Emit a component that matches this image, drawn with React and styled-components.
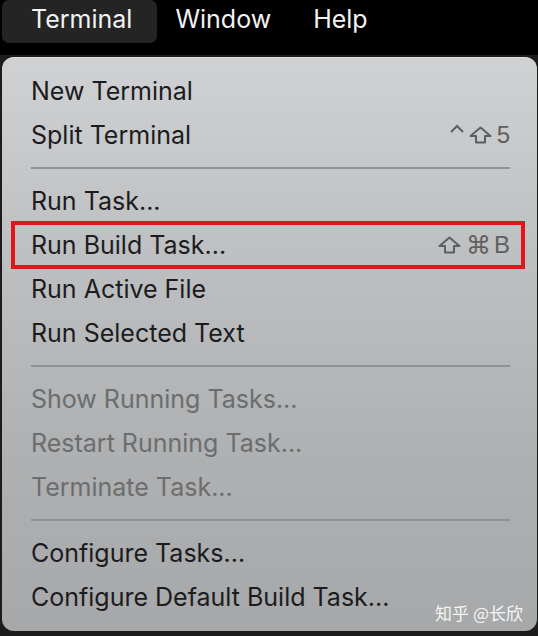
import React from 'react';
import styled, { createGlobalStyle } from 'styled-components';

const GlobalStyle = createGlobalStyle`
  html, body {
    margin: 0;
    padding: 0;
    background: #1c1c1d;
  }
  body {
    font-family: Inter, "Liberation Sans", "Noto Sans CJK SC", sans-serif;
    -webkit-font-smoothing: antialiased;
  }
`;

const Page = styled.div`
  position: relative;
  width: 538px;
  height: 636px;
  overflow: hidden;
  background: #1c1c1d;
`;

const MenuBar = styled.div`
  display: flex;
  align-items: flex-start;
  height: 55px;
  background: #000;
  padding-left: 2px;
`;

const BarItem = styled.div`
  height: 43px;
  display: flex;
  align-items: center;
  padding: 0 ${p => p.$right}px 5px ${p => p.$left}px;
  font-size: 25px;
  color: #f2f2f2;
  border-radius: 7px;
  background: ${p => (p.$active ? '#242424' : 'transparent')};
  box-sizing: border-box;
`;

const Menu = styled.div`
  margin: 2px 0 0 2px;
  width: 535px;
  box-sizing: border-box;
  padding: 12px 0;
  border-radius: 12px;
  background: linear-gradient(180deg, #d0d1d3 0%, #bdbfc0 35%, #aeb0b1 70%, #a6a8a9 100%);
  box-shadow: inset 0 1px 0 rgba(255, 255, 255, 0.35);
`;

const Row = styled.div`
  display: flex;
  align-items: center;
  justify-content: space-between;
  height: 44px;
  margin: 0 14px 0 11px;
  padding: 0 13px 0 18px;
  font-size: 25px;
  color: ${p => (p.$disabled ? '#6c6d6e' : '#1c1c1e')};
  outline: ${p => (p.$marked ? '4px solid #e4141b' : 'none')};
  outline-offset: -2px;
`;

const Keys = styled.span`
  display: flex;
  align-items: center;
  gap: 5px;
  color: #5e5f60;
  font-size: 24px;
  font-family: "Liberation Sans", Inter, sans-serif;
`;

const Glyph = styled.span`
  font-family: "DejaVu Sans", sans-serif;
  font-size: 25px;
  margin-right: -2px;
`;

const Separator = styled.div`
  height: 22px;
  display: flex;
  align-items: center;
  margin: 0 27px 0 29px;

  &::after {
    content: '';
    flex: 1;
    height: 2px;
    background: #8f9192;
  }
`;

const Watermark = styled.div`
  position: absolute;
  right: 15px;
  bottom: 11px;
  font-family: "Noto Sans CJK SC", sans-serif;
  font-size: 17px;
  color: rgba(255, 255, 255, 0.92);
`;

const Caret = () => (
  <svg width="14" height="18" viewBox="0 0 14 18" style={{ marginTop: -6 }}>
    <polyline points="1,9 7,3 13,9" fill="none" stroke="#5e5f60" strokeWidth="2" />
  </svg>
);

const Shift = () => (
  <svg width="23" height="18" viewBox="0 0 23 18">
    <path
      d="M11.5 1.5 L21.5 10 H16 V16.5 H7 V10 H1.5 Z"
      fill="none"
      stroke="#5e5f60"
      strokeWidth="2"
      strokeLinejoin="round"
    />
  </svg>
);

const groups = [
  [
    { label: 'New Terminal' },
    { label: 'Split Terminal', keys: ['caret', 'shift', '5'] },
  ],
  [
    { label: 'Run Task...' },
    { label: 'Run Build Task...', keys: ['shift', '⌘', 'B'], marked: true },
    { label: 'Run Active File' },
    { label: 'Run Selected Text' },
  ],
  [
    { label: 'Show Running Tasks...', disabled: true },
    { label: 'Restart Running Task...', disabled: true },
    { label: 'Terminate Task...', disabled: true },
  ],
  [
    { label: 'Configure Tasks...' },
    { label: 'Configure Default Build Task...' },
  ],
];

function renderKey(k) {
  if (k === 'caret') return <Caret key={k} />;
  if (k === 'shift') return <Shift key={k} />;
  if (k === '⌘') return <Glyph key={k}>⌘</Glyph>;
  return <span key={k}>{k}</span>;
}

export default function App() {
  return (
    <Page>
      <GlobalStyle />
      <MenuBar>
        <BarItem $active $left={29} $right={25}>Terminal</BarItem>
        <BarItem $left={18} $right={24}>Window</BarItem>
        <BarItem $left={18} $right={18}>Help</BarItem>
      </MenuBar>
      <Menu>
        {groups.map((group, gi) => (
          <React.Fragment key={gi}>
            {gi > 0 && <Separator />}
            {group.map(item => (
              <Row key={item.label} $disabled={item.disabled} $marked={item.marked}>
                <span>{item.label}</span>
                {item.keys && <Keys>{item.keys.map(renderKey)}</Keys>}
              </Row>
            ))}
          </React.Fragment>
        ))}
      </Menu>
      <Watermark>知乎 @长欣</Watermark>
    </Page>
  );
}
